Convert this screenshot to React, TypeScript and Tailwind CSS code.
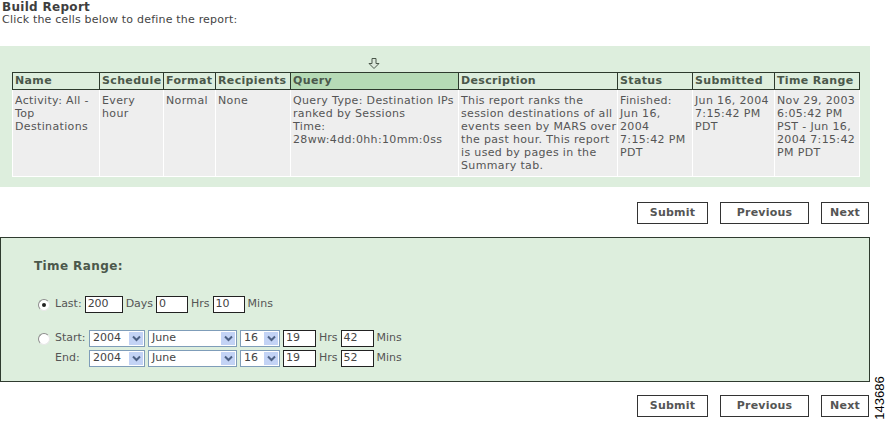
const cols = [
  { name: 'Name' },
  { name: 'Schedule' },
  { name: 'Format' },
  { name: 'Recipients' },
  { name: 'Query', active: true },
  { name: 'Description' },
  { name: 'Status' },
  { name: 'Submitted' },
  { name: 'Time Range' },
];

const row = [
  ['Activity: All -', 'Top', 'Destinations'],
  ['Every', 'hour'],
  ['Normal'],
  ['None'],
  ['Query Type: Destination IPs', 'ranked by Sessions', 'Time:', '28ww:4dd:0hh:10mm:0ss'],
  ['This report ranks the', 'session destinations of all', 'events seen by MARS over', 'the past hour. This report', 'is used by pages in the', 'Summary tab.'],
  ['Finished:', 'Jun 16,', '2004', '7:15:42 PM', 'PDT'],
  ['Jun 16, 2004', '7:15:42 PM', 'PDT'],
  ['Nov 29, 2003', '6:05:42 PM', 'PST - Jun 16,', '2004 7:15:42', 'PM PDT'],
];

const gridCols = 'grid grid-cols-[86px_63px_51px_74px_167px_158px_74px_81px_84px] gap-px';

function Buttons() {
  return (
    <div className="flex justify-end gap-[12px] pr-[17px]">
      {['Submit', 'Previous', 'Next'].map((b, i) => (
        <button
          key={b}
          className={`h-[22px] border border-[#333333] bg-white text-[11px] font-bold tracking-[0.2px] text-[#555555] ${
            i === 0 ? 'w-[71px]' : i === 1 ? 'w-[89px]' : 'w-[48px]'
          }`}
        >
          {b}
        </button>
      ))}
    </div>
  );
}

function Radio({ checked }: { checked?: boolean }) {
  return (
    <span className="ml-[4px] mr-[5px] flex h-[12px] w-[12px] items-center justify-center rounded-full border border-[#8c8c8c] border-r-[#e8e8e8] border-b-[#e8e8e8] bg-white">
      {checked && <span className="h-[4px] w-[4px] rounded-full bg-[#222222]" />}
    </span>
  );
}

function TextBox({ value, w }: { value: string; w: string }) {
  return (
    <span className={`flex h-[17px] items-center border border-[#222222] bg-white pl-[2px] text-[11px] text-[#444444] ${w}`}>
      {value}
    </span>
  );
}

function Select({ value, w }: { value: string; w: string }) {
  return (
    <span className={`flex h-[17px] items-center justify-between border border-[#7f9db9] bg-white pl-[3px] text-[11px] text-[#444444] ${w}`}>
      <span>{value}</span>
      <span className="mr-px flex h-[13px] w-[14px] items-center justify-center bg-[#c3d3f5]">
        <svg width="9" height="7" viewBox="0 0 9 7">
          <path d="M1 1.5 L4.5 5 L8 1.5" fill="none" stroke="#4d6185" strokeWidth="2" />
        </svg>
      </span>
    </span>
  );
}

function DateRow({ label, radio, y, m, d, h, min }: { label: string; radio?: boolean; y: string; m: string; d: string; h: string; min: string }) {
  return (
    <div className="flex h-[17px] items-center">
      {radio ? <Radio /> : <span className="w-[21px]" />}
      <span className="w-[34px]">{label}</span>
      <Select value={y} w="w-[56px]" />
      <span className="w-[3px]" />
      <Select value={m} w="w-[89px]" />
      <span className="w-[3px]" />
      <Select value={d} w="w-[40px]" />
      <span className="w-[3px]" />
      <TextBox value={h} w="w-[33px]" />
      <span className="mx-[3px]">Hrs</span>
      <TextBox value={min} w="w-[33px]" />
      <span className="ml-[3px]">Mins</span>
    </div>
  );
}

export default function App() {
  return (
    <div className="relative h-[422px] w-[886px] overflow-hidden bg-white font-['DejaVu_Sans',Verdana,sans-serif] text-[#555555]">
      <div className="pl-[2px]">
        <div className="text-[12px] leading-[14px] font-bold tracking-[0.3px] text-[#3f3f3f]">Build Report</div>
        <div className="text-[11px] leading-[11px] tracking-[0.2px] text-[#444444]">Click the cells below to define the report:</div>
      </div>

      <div className="mt-[21px] w-[870px] bg-[#ddeedd] pt-[12px] pb-[10px]">
        <div className="flex h-[14px] pl-[368px]">
          <svg width="12" height="12" viewBox="0 0 12 12">
            <path d="M4 0.5 H8 V5.5 H11 L6 10.5 L1 5.5 H4 Z" fill="#dbe8db" stroke="#4a574a" strokeWidth="1" />
          </svg>
        </div>
        <div className="ml-[12px] w-[848px]">
          <div className={`${gridCols} bg-[#2d3a2d] p-px`}>
            {cols.map((c) => (
              <div
                key={c.name}
                className={`h-[16px] pl-[2px] text-[11px] leading-[16px] font-bold tracking-[0.35px] text-[#4b584b] ${
                  c.active ? 'bg-[#b6dbb6]' : 'bg-[#ddeedd]'
                }`}
              >
                {c.name}
              </div>
            ))}
          </div>
          <div className={`${gridCols} bg-white px-px pb-px`}>
            {row.map((lines, i) => (
              <div key={i} className="h-[86px] bg-[#eeeeee] pt-[4px] pl-[2px] text-[11px] leading-[13px] tracking-[0.35px] whitespace-nowrap text-[#555555]">
                {lines.map((l) => (
                  <div key={l}>{l}</div>
                ))}
              </div>
            ))}
          </div>
        </div>
      </div>

      <div className="mt-[15px]">
        <Buttons />
      </div>

      <div className="mt-[13px] h-[145px] w-[870px] border border-[#2f3b2f] bg-[#ddeedd] pt-[21px] pl-[33px] text-[11px]">
        <div className="text-[12px] leading-[14px] font-bold tracking-[0.4px] text-[#4b584b]">Time Range:</div>
        <div className="mt-[23px] flex h-[17px] items-center">
          <Radio checked />
          <span className="mr-[3px]">Last:</span>
          <TextBox value="200" w="w-[38px]" />
          <span className="mx-[3px]">Days</span>
          <TextBox value="0" w="w-[32px]" />
          <span className="mx-[3px]">Hrs</span>
          <TextBox value="10" w="w-[32px]" />
          <span className="ml-[3px]">Mins</span>
        </div>
        <div className="mt-[17px] flex flex-col gap-[3px]">
          <DateRow label="Start:" radio y="2004" m="June" d="16" h="19" min="42" />
          <DateRow label="End:" y="2004" m="June" d="16" h="19" min="52" />
        </div>
      </div>

      <div className="mt-[13px]">
        <Buttons />
      </div>

      <div className="absolute top-[398px] left-[879px] origin-center -translate-x-1/2 -translate-y-1/2 -rotate-90 font-['Liberation_Sans',Arial,sans-serif] text-[13px] leading-[13px] text-black">
        143686
      </div>
    </div>
  );
}
